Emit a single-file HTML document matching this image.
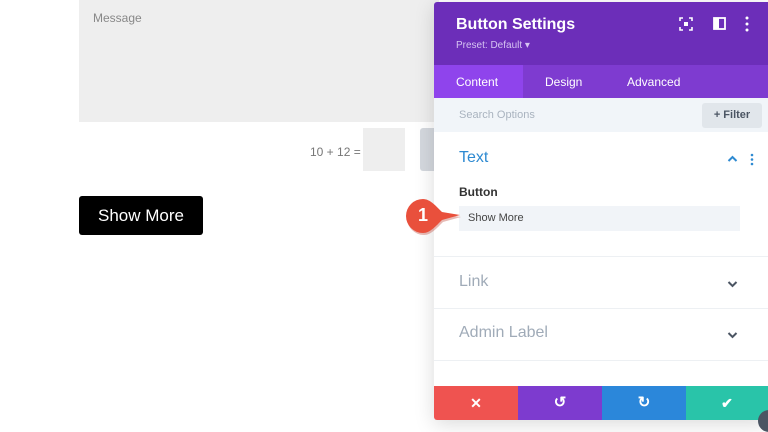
<!DOCTYPE html>
<html><head><style>
*{box-sizing:border-box;margin:0;padding:0}
body{width:768px;height:429px;overflow:hidden;background:#fff;font-family:"Liberation Sans",sans-serif;position:relative}
.a{position:absolute}
</style></head><body>
<div class="a" style="left:79px;top:0;width:360px;height:122px;background:#eeeeee"></div>
<div class="a" style="left:93px;top:11px;font-size:12px;color:#888">Message</div>
<div class="a" style="left:310px;top:145px;font-size:12px;color:#777">10 + 12 =</div>
<div class="a" style="left:363px;top:128px;width:42px;height:43px;background:#eeeeee"></div>
<div class="a" style="left:420px;top:128px;width:20px;height:43px;background:#d4d8de;border-radius:3px"></div>
<div class="a" style="left:79px;top:196px;width:124px;height:39px;background:#000;border-radius:3px;color:#fff;font-size:17px;line-height:39px;text-align:center">Show More</div>

<div class="a" style="left:434px;top:2px;width:334px;height:418px;background:#fff;box-shadow:0 4px 20px rgba(0,0,0,.15);border-radius:3px 0 0 3px;overflow:hidden">
 <div class="a" style="left:0;top:0;width:334px;height:63px;background:#6c2eb9"></div>
 <div class="a" style="left:22px;top:14px;font-size:16px;font-weight:bold;color:#fff">Button Settings</div>
 <div class="a" style="left:22px;top:38px;font-size:10px;color:#d6c4f2">Preset: Default ▾</div>
 <svg class="a" style="left:245px;top:15px" width="14" height="14"><path d="M1 4V1H4M10 1H13V4M13 10V13H10M4 13H1V10" stroke="#fff" stroke-width="1.6" fill="none"/><rect x="5" y="5" width="4" height="4" fill="#fff"/></svg>
 <svg class="a" style="left:279px;top:15px" width="13" height="13"><rect x="1" y="1" width="11" height="11" stroke="#fff" stroke-width="1.8" fill="none"/><rect x="1" y="1" width="5" height="11" fill="#fff"/></svg>
 <svg class="a" style="left:311px;top:14px" width="4" height="16"><circle cx="2" cy="2" r="1.5" fill="#fff"/><circle cx="2" cy="8" r="1.5" fill="#fff"/><circle cx="2" cy="14" r="1.5" fill="#fff"/></svg>
 <div class="a" style="left:0;top:63px;width:334px;height:33px;background:#7e3bd0"></div>
 <div class="a" style="left:0;top:63px;width:89px;height:33px;background:#8f44ec"></div>
 <div class="a" style="left:22px;top:73px;font-size:12px;color:#fff">Content</div>
 <div class="a" style="left:111px;top:73px;font-size:12px;color:#fff">Design</div>
 <div class="a" style="left:193px;top:73px;font-size:12px;color:#fff">Advanced</div>
 <div class="a" style="left:0;top:96px;width:334px;height:34px;background:#f1f5f9"></div>
 <div class="a" style="left:25px;top:107px;font-size:11px;color:#a9b3bf">Search Options</div>
 <div class="a" style="left:268px;top:101px;width:60px;height:25px;background:#e1e6eb;border-radius:3px;font-size:11px;font-weight:bold;color:#4b5563;line-height:25px;text-align:center">+ Filter</div>
 <div class="a" style="left:25px;top:147px;font-size:16px;color:#2e8ad1">Text</div>
 <svg class="a" style="left:293px;top:153px" width="11" height="8"><path d="M1.5 6L5.5 2L9.5 6" stroke="#2e8ad1" stroke-width="2" fill="none"/></svg>
 <svg class="a" style="left:316px;top:151px" width="4" height="13"><circle cx="2" cy="2" r="1.3" fill="#2e8ad1"/><circle cx="2" cy="6.5" r="1.3" fill="#2e8ad1"/><circle cx="2" cy="11" r="1.3" fill="#2e8ad1"/></svg>
 <div class="a" style="left:25px;top:183px;font-size:12px;font-weight:bold;color:#333">Button</div>
 <div class="a" style="left:25px;top:204px;width:281px;height:25px;background:#f1f4f8;font-size:11px;color:#444;line-height:25px;padding-left:9px">Show More</div>
 <div class="a" style="left:0;top:254px;width:334px;height:1px;background:#edf0f3"></div>
 <div class="a" style="left:25px;top:271px;font-size:16px;color:#a0abb8">Link</div>
 <svg class="a" style="left:293px;top:278px" width="11" height="8"><path d="M1.5 2L5.5 6L9.5 2" stroke="#4b5563" stroke-width="2" fill="none"/></svg>
 <div class="a" style="left:0;top:306px;width:334px;height:1px;background:#edf0f3"></div>
 <div class="a" style="left:25px;top:322px;font-size:16px;color:#a0abb8">Admin Label</div>
 <svg class="a" style="left:293px;top:329px" width="11" height="8"><path d="M1.5 2L5.5 6L9.5 2" stroke="#4b5563" stroke-width="2" fill="none"/></svg>
 <div class="a" style="left:0;top:358px;width:334px;height:1px;background:#edf0f3"></div>
 <div class="a" style="left:0;top:384px;width:84px;height:34px;background:#ef5350;color:#fff;text-align:center;line-height:34px;font-weight:bold;font-size:14px">✕</div>
 <div class="a" style="left:84px;top:384px;width:84px;height:34px;background:#7d3bcf;color:#fff;text-align:center;line-height:34px;font-weight:bold;font-size:15px">↺</div>
 <div class="a" style="left:168px;top:384px;width:84px;height:34px;background:#2b87da;color:#fff;text-align:center;line-height:34px;font-weight:bold;font-size:15px">↻</div>
 <div class="a" style="left:252px;top:384px;width:82px;height:34px;background:#29c4a9;color:#fff;text-align:center;line-height:34px;font-weight:bold;font-size:14px">✔</div>
</div>
<div class="a" style="left:758px;top:410px;width:22px;height:22px;border-radius:50%;background:#4b5563"></div>
<svg class="a" style="left:402px;top:196px" width="60" height="42"><path d="M21 3 A17 17 0 1 0 21 37 C28 37 34 30 40 24 L58 19 L40 16 C34 10 28 3 21 3Z" fill="#b93a2a" opacity=".35" transform="translate(1,2)"/><path d="M21 3 A17 17 0 1 0 21 37 C28 37 34 30 40 24 L58 19 L40 16 C34 10 28 3 21 3Z" fill="#e9503c"/></svg>
<div class="a" style="left:405px;top:205px;width:36px;font-size:18px;font-weight:bold;color:#fff;text-align:center">1</div>
</body></html>
